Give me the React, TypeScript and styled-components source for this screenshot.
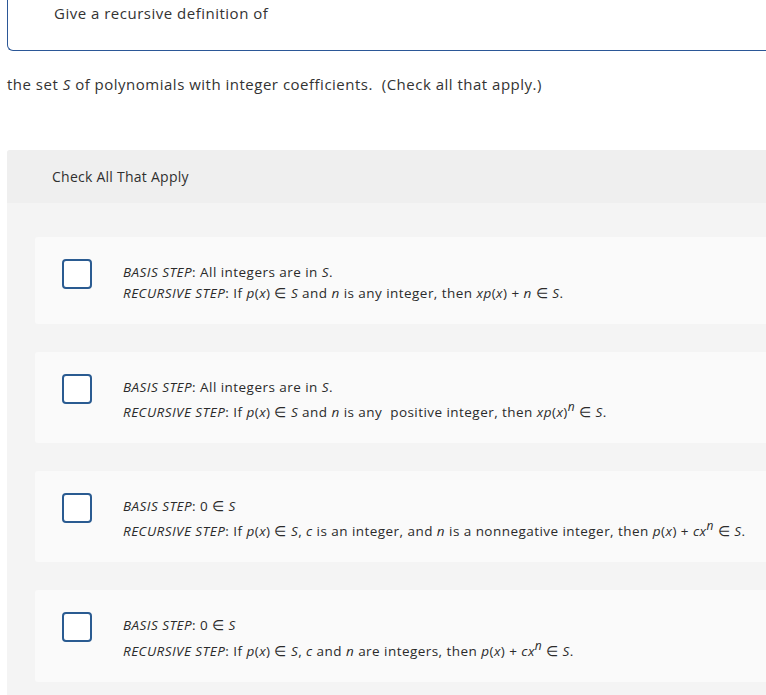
import React from "react";
import styled, { createGlobalStyle } from "styled-components";

const GlobalStyle = createGlobalStyle`
  html, body {
    margin: 0;
    padding: 0;
    background: #ffffff;
    overflow: hidden;
  }
  body {
    font-family: "Open Sans", Lato, "Liberation Sans", sans-serif;
    color: #333333;
  }
`;

const Page = styled.div`
  width: 766px;
  height: 695px;
  overflow: hidden;
  padding-left: 7px;
  box-sizing: border-box;
`;

const PromptBox = styled.div`
  width: 820px;
  height: 51px;
  box-sizing: border-box;
  border-left: 1px solid #2b5797;
  border-bottom: 1.5px solid #2b5797;
  border-bottom-left-radius: 6px;
  padding: 3px 0 0 46px;
  font-size: 15px;
  line-height: 20px;
  letter-spacing: 0.5px;
`;

const Question = styled.p`
  margin: 23px 0 0;
  font-size: 15px;
  line-height: 20px;
  letter-spacing: 0.5px;
`;

const Panel = styled.section`
  margin-top: 56px;
  width: 820px;
  background: #f4f4f4;
  border-top-left-radius: 3px;
  padding-bottom: 40px;
`;

const PanelHeader = styled.div`
  height: 53px;
  display: flex;
  align-items: center;
  padding-left: 45px;
  background: #efefef;
  border-top-left-radius: 3px;
  font-size: 14px;
  letter-spacing: 0.25px;
  color: #2f2f2f;
`;

const Options = styled.div`
  display: flex;
  flex-direction: column;
  gap: 28px;
  padding: 34px 0 0 28px;
`;

const Option = styled.label`
  display: flex;
  align-items: flex-start;
  gap: 31px;
  padding: 22px 27px 20px;
  background: #fafafa;
  border-top-left-radius: 3px;
  border-bottom-left-radius: 3px;
  cursor: pointer;
`;

const Box = styled.span`
  flex: none;
  width: 30px;
  height: 30px;
  box-sizing: border-box;
  border: 2px solid #2a5b91;
  border-radius: 4px;
  background: #ffffff;
`;

const Statement = styled.div`
  padding-top: 3px;
  font-size: 13.5px;
  line-height: 21px;
  letter-spacing: 0.45px;
  color: #2b2b2b;
`;

const Line = styled.div<{ $gap?: number }>`
  margin-top: ${({ $gap }) => $gap ?? 0}px;
`;

const I = styled.i`
  font-style: italic;
`;

const Sup = styled.sup`
  font-size: 12px;
  font-style: italic;
  line-height: 0;
  vertical-align: 6px;
`;

const Basis = ({ children }: { children: React.ReactNode }) => (
  <Line>
    <I>BASIS STEP</I>: {children}
  </Line>
);

const Recursive = ({ children, gap }: { children: React.ReactNode; gap?: number }) => (
  <Line $gap={gap}>
    <I>RECURSIVE STEP</I>: {children}
  </Line>
);

export default function App() {
  return (
    <>
      <GlobalStyle />
      <Page>
        <PromptBox>Give a recursive definition of</PromptBox>
        <Question>
          the set <I>S</I> of polynomials with integer coefficients.&nbsp; (Check all that apply.)
        </Question>
        <Panel>
          <PanelHeader>Check All That Apply</PanelHeader>
          <Options>
            <Option>
              <Box />
              <Statement>
                <Basis>
                  All integers are in <I>S</I>.
                </Basis>
                <Recursive>
                  If <I>p</I>(<I>x</I>) ∈ <I>S</I> and <I>n</I> is any integer, then <I>xp</I>(<I>x</I>) + <I>n</I> ∈ <I>S</I>.
                </Recursive>
              </Statement>
            </Option>
            <Option>
              <Box />
              <Statement>
                <Basis>
                  All integers are in <I>S</I>.
                </Basis>
                <Recursive gap={4}>
                  If <I>p</I>(<I>x</I>) ∈ <I>S</I> and <I>n</I> is any&nbsp; positive integer, then <I>xp</I>(<I>x</I>)
                  <Sup>n</Sup> ∈ <I>S</I>.
                </Recursive>
              </Statement>
            </Option>
            <Option>
              <Box />
              <Statement>
                <Basis>
                  0 ∈ <I>S</I>
                </Basis>
                <Recursive gap={4}>
                  If <I>p</I>(<I>x</I>) ∈ <I>S</I>, <I>c</I> is an integer, and <I>n</I> is a nonnegative integer, then{" "}
                  <I>p</I>(<I>x</I>) + <I>cx</I>
                  <Sup>n</Sup> ∈ <I>S</I>.
                </Recursive>
              </Statement>
            </Option>
            <Option>
              <Box />
              <Statement>
                <Basis>
                  0 ∈ <I>S</I>
                </Basis>
                <Recursive gap={5}>
                  If <I>p</I>(<I>x</I>) ∈ <I>S</I>, <I>c</I> and <I>n</I> are integers, then <I>p</I>(<I>x</I>) + <I>cx</I>
                  <Sup>n</Sup> ∈ <I>S</I>.
                </Recursive>
              </Statement>
            </Option>
          </Options>
        </Panel>
      </Page>
    </>
  );
}
